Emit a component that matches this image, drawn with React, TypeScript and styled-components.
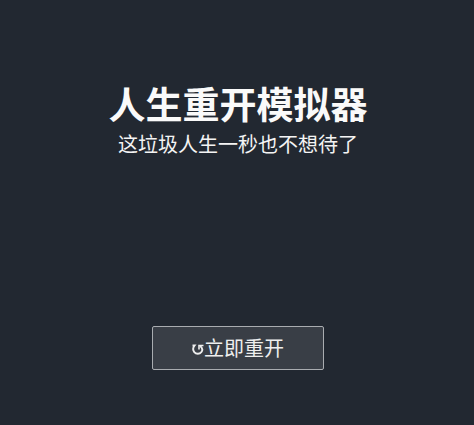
import React from "react";
import styled, { createGlobalStyle } from "styled-components";

const GlobalStyle = createGlobalStyle`
  *, *::before, *::after { box-sizing: border-box; }
  body {
    margin: 0;
    background: #222831;
    color: #eeeeee;
    font-family: "Noto Sans CJK SC", sans-serif;
  }
`;

const Page = styled.main`
  min-height: 100vh;
  display: flex;
  flex-direction: column;
  align-items: center;
  justify-content: space-between;
  padding: 79px 16px 55px 18px;
  background: #222831;
`;

const Heading = styled.header`
  text-align: center;
`;

const Title = styled.h1`
  margin: 0;
  font-size: 37px;
  font-weight: 700;
  line-height: 48px;
  color: #fafafa;
`;

const Subtitle = styled.p`
  margin: 0;
  font-size: 20px;
  line-height: 34px;
  color: #f4f4f4;
`;

const RestartButton = styled.button`
  display: flex;
  align-items: center;
  justify-content: center;
  width: 172px;
  height: 44px;
  padding: 0;
  border: 1px solid #a9acb0;
  border-radius: 2px;
  background: #393e46;
  color: #eeeeee;
  font-family: "Noto Sans CJK SC", sans-serif;
  font-size: 20px;
  line-height: 28px;
  cursor: pointer;

  &:hover { background: #454b55; }
`;

const RestartIcon = styled.svg`
  width: 12px;
  height: 16px;
  flex: none;
`;

export default function App() {
  return (
    <>
      <GlobalStyle />
      <Page>
        <Heading>
          <Title>人生重开模拟器</Title>
          <Subtitle>这垃圾人生一秒也不想待了</Subtitle>
        </Heading>
        <RestartButton type="button">
          <RestartIcon viewBox="0 0 12 16" aria-hidden="true">
            <path d="M0.5 5.5H2.6C1 7.5 0.9 10.4 2.3 12.2C4 14.2 7.6 14.2 9.3 12.2C10.8 10.3 10.5 7.9 8.2 6" fill="none" stroke="currentColor" strokeWidth="1.9" />
            <path d="M11.5 5.5H7V9.5" fill="none" stroke="currentColor" strokeWidth="1.6" />
          </RestartIcon>
          立即重开
        </RestartButton>
      </Page>
    </>
  );
}
